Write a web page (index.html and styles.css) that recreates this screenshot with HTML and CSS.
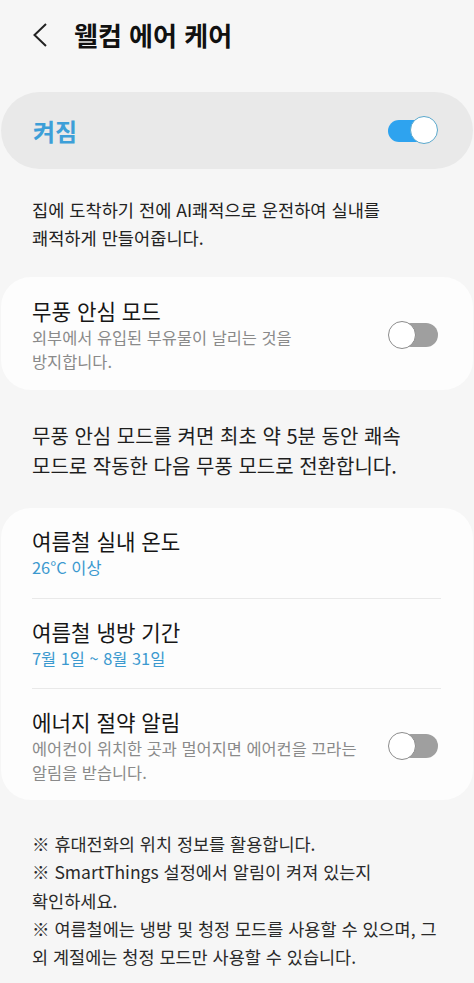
FILE: index.html
```html
<!DOCTYPE html>
<html lang="ko">
<head>
  <meta charset="UTF-8" />
  <meta name="viewport" content="width=device-width, initial-scale=1.0"/>
  <title>웰컴 에어 케어</title>
  <link rel="stylesheet" href="styles.css">
</head>
<body>
  <header class="topbar">
    <svg class="back" width="14" height="24" viewBox="0 0 14 24">
      <polyline points="13,1 1.5,12 13,23" fill="none" stroke="#222" stroke-width="2" />
    </svg>
    <h1>웰컴 에어 케어</h1>
  </header>

  <div class="master">
    <span class="master-label">켜짐</span>
    <span class="switch on"></span>
  </div>

  <p class="desc">집에 도착하기 전에 AI쾌적으로 운전하여 실내를<br>쾌적하게 만들어줍니다.</p>

  <section class="card">
    <div class="row">
      <div class="row-text">
        <div class="row-title">무풍 안심 모드</div>
        <div class="row-sub">외부에서 유입된 부유물이 날리는 것을<br>방지합니다.</div>
      </div>
      <span class="switch"></span>
    </div>
  </section>

  <p class="note">무풍 안심 모드를 켜면 최초 약 5분 동안 쾌속<br>모드로 작동한 다음 무풍 모드로 전환합니다.</p>

  <section class="card">
    <div class="row">
      <div class="row-text">
        <div class="row-title">여름철 실내 온도</div>
        <div class="row-sub blue">26°C 이상</div>
      </div>
    </div>
    <div class="row">
      <div class="row-text">
        <div class="row-title">여름철 냉방 기간</div>
        <div class="row-sub blue">7월 1일 ~ 8월 31일</div>
      </div>
    </div>
    <div class="row last">
      <div class="row-text">
        <div class="row-title">에너지 절약 알림</div>
        <div class="row-sub">에어컨이 위치한 곳과 멀어지면 에어컨을 끄라는<br>알림을 받습니다.</div>
      </div>
      <span class="switch"></span>
    </div>
  </section>

  <p class="footnote">
    ※ 휴대전화의 위치 정보를 활용합니다.<br>
    ※ SmartThings 설정에서 알림이 켜져 있는지<br>
    확인하세요.<br>
    ※ 여름철에는 냉방 및 청정 모드를 사용할 수 있으며, 그<br>
    외 계절에는 청정 모드만 사용할 수 있습니다.
  </p>
</body>
</html>
```

FILE: styles.css
```css
body {
  margin: 0;
  background: #f6f6f6;
  color: #1c1c1c;
  font-family: "Noto Sans CJK KR", "Noto Sans", sans-serif;
  word-break: keep-all;
}

.topbar {
  display: flex;
  align-items: center;
  height: 70px;
  padding-left: 33px;
}

.back {
  display: block;
}

.topbar h1 {
  margin: 0 0 0 27px;
  font-size: 26px;
  font-weight: 700;
  line-height: 30px;
  color: #111;
}

.master {
  display: flex;
  align-items: center;
  justify-content: space-between;
  height: 77px;
  margin: 22px 1px 0;
  padding: 0 35px 0 32px;
  background: #e9e9e9;
  border-radius: 39px;
}

.master-label {
  font-size: 24px;
  font-weight: 700;
  color: #3d9fd8;
}

.desc {
  margin: 27px 0 0;
  padding: 0 32px;
  font-size: 17.6px;
  line-height: 28px;
  color: #222;
}

.card {
  margin: 25px 1px 0;
  padding: 0 35px 0 31px;
  background: #fdfdfd;
  border-radius: 30px;
}

.row {
  display: flex;
  align-items: center;
  justify-content: space-between;
  padding: 19px 0 18px;
  border-bottom: 1px solid #e9e9e9;
  margin-right: -3px;
  padding-right: 3px;
}

.row.last,
.card .row:only-child {
  border-bottom: none;
}

.card .row:only-child {
  padding: 20px 3px 17px 0;
}

.row.last {
  padding-bottom: 16px;
}

.row-title {
  font-size: 21.2px;
  line-height: 28px;
  color: #161616;
}

.row-sub {
  margin-top: 1px;
  font-size: 16.4px;
  line-height: 23.5px;
  color: #8a8a8a;
}

.row-sub.blue {
  color: #3b99cf;
}

.note {
  margin: 31px 0 0;
  padding: 0 32px;
  font-size: 20px;
  line-height: 30px;
  color: #1e1e1e;
}

.note + .card {
  margin-top: 27px;
}

.footnote {
  margin: 30px 0 0;
  padding: 0 32px;
  font-size: 17.5px;
  line-height: 28.3px;
  color: #2a2a2a;
}

/* switches */
.switch {
  position: relative;
  flex: none;
  width: 50px;
  height: 29px;
}

.switch::before {
  content: "";
  position: absolute;
  top: 2.5px;
  left: 11px;
  right: 0;
  height: 24px;
  border-radius: 12px;
  background: #9f9f9f;
}

.switch::after {
  content: "";
  position: absolute;
  top: 0;
  left: 0;
  width: 26px;
  height: 26px;
  border-radius: 50%;
  background: #fff;
  border: 1.5px solid #8c8c8c;
}

.switch.on::before {
  left: 0;
  right: 3px;
  top: 3.5px;
  height: 22px;
  border-radius: 11px;
  background: #2ea3ef;
}

.switch.on::after {
  left: auto;
  right: 0;
  border-color: #5aa8cc;
}
```
